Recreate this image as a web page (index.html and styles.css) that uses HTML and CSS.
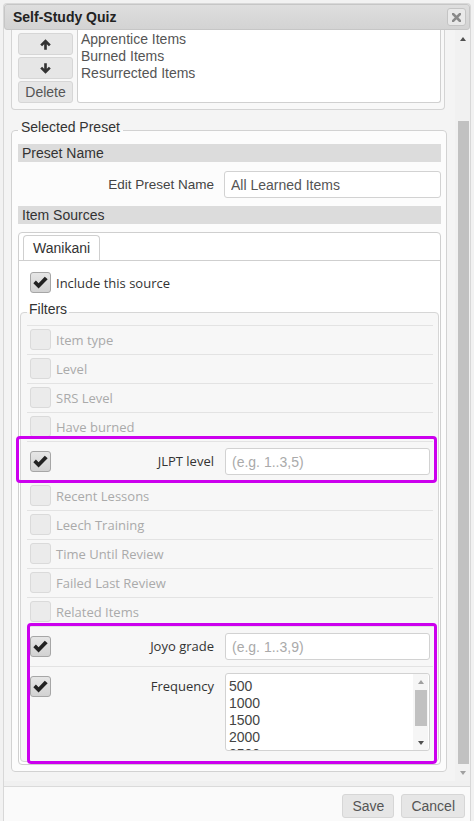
FILE: index.html
```html
<!DOCTYPE html>
<html lang="en">
<head>
<meta charset="utf-8">
<title>Self-Study Quiz</title>
<link rel="stylesheet" href="styles.css">
</head>
<body>
<div class="dialog">
  <div class="titlebar">
    <span class="title">Self-Study Quiz</span>
    <span class="close"><svg width="9" height="9" viewBox="0 0 9 9"><path d="M1 1 L8 8 M8 1 L1 8" stroke="#8a8a8a" stroke-width="2.6" stroke-linecap="square"/></svg></span>
  </div>
  <div class="body">
    <div class="scroll">
      <div class="presets">
        <div class="preset-btns">
          <span class="btn icon-btn"><svg width="11" height="11" viewBox="0 0 10 10"><path d="M5 0.2 L9.8 5 L8.1 6.6 L6.2 4.7 V9.8 H3.8 V4.7 L1.9 6.6 L0.2 5 Z" fill="#333"/></svg></span>
          <span class="btn icon-btn"><svg width="11" height="11" viewBox="0 0 10 10"><path d="M5 9.8 L9.8 5 L8.1 3.4 L6.2 5.3 V0.2 H3.8 V5.3 L1.9 3.4 L0.2 5 Z" fill="#333"/></svg></span>
          <span class="btn">Delete</span>
        </div>
        <div class="preset-list">
          <div>Apprentice Items</div>
          <div>Burned Items</div>
          <div>Resurrected Items</div>
        </div>
      </div>

      <fieldset class="selected">
        <legend>Selected Preset</legend>
        <div class="section-head">Preset Name</div>
        <div class="name-row">
          <label class="name-label">Edit Preset Name</label>
          <input class="text-input name-input" type="text" value="All Learned Items">
        </div>
        <div class="section-head">Item Sources</div>
        <div class="tabs">
          <div class="tab-nav"><span class="tab">Wanikani</span></div>
          <div class="tab-panel">
            <div class="include">
              <span class="cb on"><svg width="15" height="13" viewBox="0 0 14 12"><path d="M0.3 6.6 L2.7 4.2 L5.2 6.6 L11 0.6 L13.7 3 L5.2 11.6 Z" fill="#222"/></svg></span>
              <span>Include this source</span>
            </div>
            <fieldset class="filters">
              <legend>Filters</legend>
              <div class="frow off"><span class="cb"></span><span>Item type</span></div>
              <div class="frow off"><span class="cb"></span><span>Level</span></div>
              <div class="frow off"><span class="cb"></span><span>SRS Level</span></div>
              <div class="frow off"><span class="cb"></span><span>Have burned</span></div>
              <div class="frow active hl-row">
                <span class="cb on"><svg width="15" height="13" viewBox="0 0 14 12"><path d="M0.3 6.6 L2.7 4.2 L5.2 6.6 L11 0.6 L13.7 3 L5.2 11.6 Z" fill="#222"/></svg></span>
                <label class="flabel">JLPT level</label>
                <input class="text-input finput" type="text" placeholder="(e.g. 1..3,5)">
              </div>
              <div class="frow off"><span class="cb"></span><span>Recent Lessons</span></div>
              <div class="frow off"><span class="cb"></span><span>Leech Training</span></div>
              <div class="frow off"><span class="cb"></span><span>Time Until Review</span></div>
              <div class="frow off"><span class="cb"></span><span>Failed Last Review</span></div>
              <div class="frow off"><span class="cb"></span><span>Related Items</span></div>
              <div class="hl-group">
                <div class="frow active">
                  <span class="cb on"><svg width="15" height="13" viewBox="0 0 14 12"><path d="M0.3 6.6 L2.7 4.2 L5.2 6.6 L11 0.6 L13.7 3 L5.2 11.6 Z" fill="#222"/></svg></span>
                  <label class="flabel">Joyo grade</label>
                  <input class="text-input finput" type="text" placeholder="(e.g. 1..3,9)">
                </div>
                <div class="frow active">
                  <span class="cb on"><svg width="15" height="13" viewBox="0 0 14 12"><path d="M0.3 6.6 L2.7 4.2 L5.2 6.6 L11 0.6 L13.7 3 L5.2 11.6 Z" fill="#222"/></svg></span>
                  <label class="flabel">Frequency</label>
                  <div class="listbox">
                    <div class="opts">
                      <div>500</div>
                      <div>1000</div>
                      <div>1500</div>
                      <div>2000</div>
                      <div>2500</div>
                    </div>
                    <div class="lb-scroll">
                      <span class="sb-btn"><span class="tri up light"></span></span>
                      <span class="lb-track"><span class="lb-thumb"></span></span>
                      <span class="sb-btn"><span class="tri down"></span></span>
                    </div>
                  </div>
                </div>
              </div>
            </fieldset>
          </div>
        </div>
      </fieldset>
    </div>
    <div class="vscroll">
      <span class="vs-btn"><span class="tri up"></span></span>
      <span class="vs-track"><span class="vs-thumb"></span></span>
      <span class="vs-btn"><span class="tri down light"></span></span>
    </div>
  </div>
  <div class="strip"></div>
  <div class="footer">
    <span class="btn fbtn">Save</span>
    <span class="btn fbtn">Cancel</span>
  </div>
</div>
</body>
</html>
```

FILE: styles.css
```css
* { box-sizing: border-box; }

html, body {
  margin: 0;
  padding: 0;
}

body {
  width: 474px;
  height: 821px;
  overflow: hidden;
  background: #f2f2f2;
  font-family: "Liberation Sans", Arial, sans-serif;
  font-size: 14px;
  color: #444;
}

.dialog {
  margin: 3px 0 0 3px;
  width: 468px;
  height: 818px;
  border: 1px solid #d8d8d8;
  border-bottom: none;
  border-radius: 4px 4px 0 0;
  background: #f4f4f4;
  display: flex;
  flex-direction: column;
}

/* title bar */
.titlebar {
  height: 26px;
  flex: none;
  border: 1px solid #c6c6c6;
  border-radius: 3px;
  background: linear-gradient(#dedede, #d3d3d3);
  display: flex;
  align-items: center;
  justify-content: space-between;
  padding: 0 3px 0 8px;
}

.title {
  font-weight: bold;
  font-size: 14px;
  color: #222;
}

.close {
  width: 19px;
  height: 18px;
  border: 1px solid #c4c4c4;
  border-radius: 3px;
  background: #e9e9e9;
  display: flex;
  align-items: center;
  justify-content: center;
}

/* body */
.body {
  display: flex;
  height: 751px;
  flex: none;
}

.scroll {
  flex: 1;
  overflow: hidden;
  padding-left: 7px;
  background: #f4f4f4;
}

.vscroll {
  width: 15px;
  background: #f1f1f1;
  display: flex;
  flex-direction: column;
}

.vs-btn {
  height: 17px;
  display: flex;
  align-items: center;
  justify-content: center;
}

.vs-track {
  flex: 1;
  display: flex;
  flex-direction: column;
  justify-content: flex-end;
}

.vs-thumb {
  height: 643px;
  width: 11px;
  margin-left: 3px;
  background: #c1c1c1;
}

.tri {
  width: 0;
  height: 0;
  border-left: 3.5px solid transparent;
  border-right: 3.5px solid transparent;
}

.tri.up { border-bottom: 4px solid #505050; }
.tri.down { border-top: 4px solid #505050; }
.tri.up.light { border-bottom-color: #a0a0a0; }
.tri.down.light { border-top-color: #a0a0a0; }

/* presets */
.presets {
  margin-right: 10px;
  height: 80px;
  border: 1px solid #d4d4d4;
  border-top: none;
  border-radius: 0 0 4px 4px;
  padding: 0 3px 6px 6px;
  background: #f8f8f8;
  display: flex;
  gap: 4px;
}

.preset-btns {
  width: 55px;
  padding-top: 3px;
  display: flex;
  flex-direction: column;
  gap: 2px;
}

.btn {
  display: flex;
  align-items: center;
  justify-content: center;
  height: 22px;
  border: 1px solid #d6d6d6;
  border-radius: 3px;
  background: #e6e6e6;
  color: #555;
  font-size: 14px;
}

.preset-list {
  flex: 1;
  border: 1px solid #d0d0d0;
  border-top: none;
  border-radius: 0 0 3px 3px;
  padding: 1px 0 0 3px;
  line-height: 17px;
  background: #fff;
  color: #555;
}

/* selected preset */
.selected {
  margin: 9px 8px 0 0;
  border: 1px solid #d2d2d2;
  border-radius: 4px;
  padding: 3px 5px 6px 6px;
  background: #fcfcfc;
  min-width: 0;
}

legend {
  padding: 0 3px 6px 3px;
  line-height: 16px;
  font-size: 14px;
  color: #333;
}

.section-head {
  height: 18px;
  line-height: 18px;
  padding-left: 4px;
  background: #dcdcdc;
  color: #333;
}

.name-row {
  display: flex;
  align-items: center;
  margin: 9px 0 8px;
}

.name-label {
  flex: 1;
  text-align: right;
  margin-right: 10px;
  font-size: 13.5px;
  color: #444;
}

.text-input {
  height: 27px;
  border: 1px solid #d2d2d2;
  border-radius: 3px;
  background: #fff;
  padding: 0 6px;
  font-family: "Liberation Sans", Arial, sans-serif;
  font-size: 14px;
  color: #555;
  outline: none;
}

.text-input::placeholder { color: #aaa; }

.name-input { width: 217px; }

/* tabs */
.tabs {
  margin-top: 8px;
  border: 1px solid #cfcfcf;
  border-radius: 4px;
  background: #fff;
}

.tab-nav {
  padding: 2px 0 0 4px;
  border-bottom: 1px solid #cfcfcf;
  display: flex;
}

.tab {
  height: 25px;
  line-height: 24px;
  padding: 0 9px;
  border: 1px solid #cfcfcf;
  border-bottom: none;
  border-radius: 4px 4px 0 0;
  background: #fff;
  color: #333;
}

.tab-panel {
  padding: 11px 0 2px 0;
}

.include {
  display: flex;
  align-items: center;
  padding-left: 11px;
  font-family: "Open Sans", sans-serif;
  font-size: 13px;
  color: #333;
}

.cb {
  flex: none;
  width: 21px;
  height: 21px;
  margin-right: 5px;
  border: 1px solid #dadada;
  border-radius: 3px;
  background: #ebebeb;
  display: flex;
  align-items: center;
  justify-content: center;
}

.cb.on {
  border-color: #a6a6a6;
  background: linear-gradient(#e6e6e6, #d2d2d2);
}

/* filters */
.filters {
  margin: 8px 1px 0;
  border: 1px solid #d6d6d6;
  border-radius: 4px;
  padding: 2px 5px 4px 6px;
  background: #f7f7f7;
  min-width: 0;
}

.filters legend {
  padding: 0 2px 6px 2px;
}

.frow {
  display: flex;
  align-items: center;
  padding: 3px 3px 4px;
  border-top: 1px solid #e3e3e3;
  font-family: "Open Sans", sans-serif;
  font-size: 13px;
}

.frow.off { color: #aaa; }

.frow.active {
  align-items: flex-start;
  padding: 6px 3px;
  color: #333;
}

.frow.active .cb { margin-top: 3px; }

.flabel {
  flex: 1;
  text-align: right;
  line-height: 27px;
  margin-right: 11px;
}

.finput { width: 205px; }

.hl-row,
.hl-group {
  position: relative;
}

.hl-row::after,
.hl-group::after {
  content: "";
  position: absolute;
  border: 3px solid #cc00ee;
  border-radius: 4px;
  pointer-events: none;
}

.hl-row::after {
  top: -6px;
  left: -11px;
  right: -4px;
  bottom: -2px;
}

.hl-group::after {
  top: -3px;
  left: 0;
  right: -4px;
  bottom: -7px;
}

/* frequency listbox */
.listbox {
  width: 205px;
  height: 78px;
  border: 1px solid #d2d2d2;
  border-radius: 3px;
  background: #fff;
  display: flex;
  overflow: hidden;
}

.opts {
  flex: 1;
  padding: 4px 0 0 3px;
  line-height: 17px;
  font-family: "Liberation Sans", Arial, sans-serif;
  font-size: 14px;
  color: #444;
}

.lb-scroll {
  width: 15px;
  margin: 0 1px 0 0;
  background: #f6f6f6;
  display: flex;
  flex-direction: column;
}

.sb-btn {
  height: 15px;
  display: flex;
  align-items: center;
  justify-content: center;
}

.lb-track {
  flex: 1;
  padding-top: 1px;
}

.lb-thumb {
  display: block;
  width: 12px;
  height: 36px;
  margin-left: 2px;
  background: #c1c1c1;
}

/* footer */
.strip {
  height: 5px;
  flex: none;
  background: #f0f0f0;
}

.footer {
  flex: 1;
  border-top: 1px solid #dadada;
  background: #fafafa;
  display: flex;
  justify-content: flex-end;
  align-items: flex-start;
  gap: 7px;
  padding: 7px 5px 0 0;
}

.fbtn {
  height: 24px;
  padding: 0 9px;
  font-size: 14px;
  color: #555;
}
```
